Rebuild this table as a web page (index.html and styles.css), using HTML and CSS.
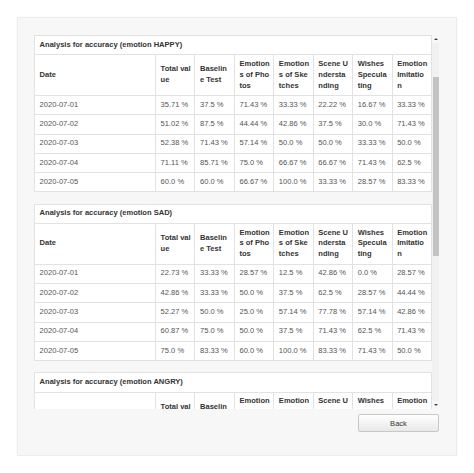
FILE: index.html
```html
<!DOCTYPE html>
<html>
<head>
<meta charset="utf-8">
<link rel="stylesheet" href="styles.css">
</head>
<body>
<div class="panel">
  <div class="scroller">
    <div class="scroll-content">
      <table class="report">
        <colgroup><col class="c-date"><col><col><col><col><col><col><col></colgroup>
        <thead>
          <tr><th class="title" colspan="8">Analysis for accuracy (emotion HAPPY)</th></tr>
          <tr class="head">
            <th>Date</th><th>Total val<br>ue</th><th>Baselin<br>e Test</th><th>Emotion<br>s of Pho<br>tos</th><th>Emotion<br>s of Ske<br>tches</th><th>Scene U<br>ndersta<br>nding</th><th>Wishes<br>Specula<br>ting</th><th>Emotion<br>Imitatio<br>n</th>
          </tr>
        </thead>
        <tbody>
          <tr><td>2020-07-01</td><td>35.71 %</td><td>37.5 %</td><td>71.43 %</td><td>33.33 %</td><td>22.22 %</td><td>16.67 %</td><td>33.33 %</td></tr>
          <tr><td>2020-07-02</td><td>51.02 %</td><td>87.5 %</td><td>44.44 %</td><td>42.86 %</td><td>37.5 %</td><td>30.0 %</td><td>71.43 %</td></tr>
          <tr><td>2020-07-03</td><td>52.38 %</td><td>71.43 %</td><td>57.14 %</td><td>50.0 %</td><td>50.0 %</td><td>33.33 %</td><td>50.0 %</td></tr>
          <tr><td>2020-07-04</td><td>71.11 %</td><td>85.71 %</td><td>75.0 %</td><td>66.67 %</td><td>66.67 %</td><td>71.43 %</td><td>62.5 %</td></tr>
          <tr><td>2020-07-05</td><td>60.0 %</td><td>60.0 %</td><td>66.67 %</td><td>100.0 %</td><td>33.33 %</td><td>28.57 %</td><td>83.33 %</td></tr>
        </tbody>
      </table>
      <table class="report">
        <colgroup><col class="c-date"><col><col><col><col><col><col><col></colgroup>
        <thead>
          <tr><th class="title" colspan="8">Analysis for accuracy (emotion SAD)</th></tr>
          <tr class="head">
            <th>Date</th><th>Total val<br>ue</th><th>Baselin<br>e Test</th><th>Emotion<br>s of Pho<br>tos</th><th>Emotion<br>s of Ske<br>tches</th><th>Scene U<br>ndersta<br>nding</th><th>Wishes<br>Specula<br>ting</th><th>Emotion<br>Imitatio<br>n</th>
          </tr>
        </thead>
        <tbody>
          <tr><td>2020-07-01</td><td>22.73 %</td><td>33.33 %</td><td>28.57 %</td><td>12.5 %</td><td>42.86 %</td><td>0.0 %</td><td>28.57 %</td></tr>
          <tr><td>2020-07-02</td><td>42.86 %</td><td>33.33 %</td><td>50.0 %</td><td>37.5 %</td><td>62.5 %</td><td>28.57 %</td><td>44.44 %</td></tr>
          <tr><td>2020-07-03</td><td>52.27 %</td><td>50.0 %</td><td>25.0 %</td><td>57.14 %</td><td>77.78 %</td><td>57.14 %</td><td>42.86 %</td></tr>
          <tr><td>2020-07-04</td><td>60.87 %</td><td>75.0 %</td><td>50.0 %</td><td>37.5 %</td><td>71.43 %</td><td>62.5 %</td><td>71.43 %</td></tr>
          <tr><td>2020-07-05</td><td>75.0 %</td><td>83.33 %</td><td>60.0 %</td><td>100.0 %</td><td>83.33 %</td><td>71.43 %</td><td>50.0 %</td></tr>
        </tbody>
      </table>
      <table class="report">
        <colgroup><col class="c-date"><col><col><col><col><col><col><col></colgroup>
        <thead>
          <tr><th class="title" colspan="8">Analysis for accuracy (emotion ANGRY)</th></tr>
          <tr class="head">
            <th>Date</th><th>Total val<br>ue</th><th>Baselin<br>e Test</th><th>Emotion<br>s of Pho<br>tos</th><th>Emotion<br>s of Ske<br>tches</th><th>Scene U<br>ndersta<br>nding</th><th>Wishes<br>Specula<br>ting</th><th>Emotion<br>Imitatio<br>n</th>
          </tr>
        </thead>
        <tbody>
          <tr><td>2020-07-01</td><td>20.0 %</td><td>25.0 %</td><td>33.33 %</td><td>0.0 %</td><td>16.67 %</td><td>25.0 %</td><td>20.0 %</td></tr>
          <tr><td>2020-07-02</td><td>30.0 %</td><td>40.0 %</td><td>25.0 %</td><td>33.33 %</td><td>20.0 %</td><td>37.5 %</td><td>25.0 %</td></tr>
        </tbody>
      </table>
    </div>
    <div class="scrollbar">
      <div class="arrow-box"><span class="arrow up"></span></div>
      <div class="track"><div class="thumb"></div></div>
      <div class="arrow-box"><span class="arrow down"></span></div>
    </div>
  </div>
  <div class="actions">
    <button class="btn" type="button">Back</button>
  </div>
</div>
</body>
</html>
```

FILE: styles.css
```css
* { box-sizing: border-box; }
html, body { margin: 0; padding: 0; background: #fff; }
body {
  font-family: "Liberation Sans", Arial, sans-serif;
  font-size: 7.55px;
  color: #333;
}
.panel {
  margin: 17px 0 0 17px;
  width: 440px;
  height: 439px;
  background: #f7f7f7;
  border: 1px solid #ececec;
  box-shadow: 0 0 2px rgba(0,0,0,0.04);
  padding: 17px 17px 0 16px;
}
.scroller {
  display: flex;
  height: 374px;
}
.scroll-content {
  flex: 1;
  overflow: hidden;
  min-width: 0;
}
.report {
  width: 100%;
  table-layout: fixed;
  border-collapse: collapse;
  background: #fff;
  margin-bottom: 11.2px;
  border: 1px solid #e2e2e2;
}
.report col.c-date { width: 121px; }
.report th, .report td {
  border: 1px solid #e2e2e2;
  padding: 3.8px 4.6px;
  line-height: 10.7px;
  text-align: left;
  vertical-align: middle;
  white-space: nowrap;
  overflow: visible;
}
.report th { font-weight: bold; color: #333; }
.report th.title { color: #333; }
.report td { color: #555; }
.scrollbar {
  width: 7px;
  display: flex;
  flex-direction: column;
  background: #f3f3f3;
}
.arrow-box {
  height: 8px;
  display: flex;
  align-items: center;
  justify-content: center;
  background: #f7f7f7;
}
.arrow {
  width: 0;
  height: 0;
  border-left: 2px solid transparent;
  border-right: 2px solid transparent;
}
.arrow.up { border-bottom: 2.5px solid #444; }
.arrow.down { border-top: 2.5px solid #444; }
.track {
  flex: 1;
  padding: 33.7px 0.5px 0 0.5px;
  background: #f1f1f1;
}
.thumb {
  height: 179px;
  background: #c3c3c3;
}
.actions {
  display: flex;
  justify-content: flex-end;
  padding-top: 5px;
}
.btn {
  width: 81px;
  height: 18px;
  font-family: "Liberation Sans", Arial, sans-serif;
  font-size: 7.55px;
  color: #333;
  background: linear-gradient(#ffffff, #e8e8e8);
  border: 1px solid #c8c8c8;
  border-radius: 2px;
  padding: 0;
}
```
